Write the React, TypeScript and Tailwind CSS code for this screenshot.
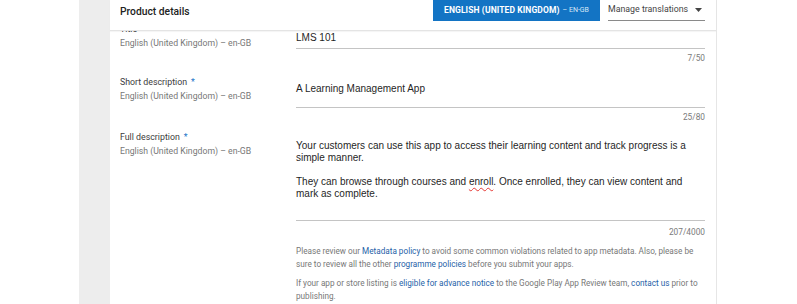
const labelFont = { fontFamily: "Roboto, 'Liberation Sans', sans-serif" };

function FieldLabel({ title, required = false }: { title: string; required?: boolean }) {
  return (
    <div className="w-[176px] shrink-0" style={labelFont}>
      <div className="text-[8.8px] leading-[12px] text-[#3c3c3c]">
        {title}
        {required && <span className="ml-[4px] text-[#1a73c8]">*</span>}
      </div>
      <div className="mt-[2px] text-[8.7px] leading-[12px] text-[#777]">English (United Kingdom) – en-GB</div>
    </div>
  );
}

function Counter({ value, className = "" }: { value: string; className?: string }) {
  return (
    <div className={`text-right text-[8.3px] leading-[10px] text-[#7a7a7a] ${className}`} style={labelFont}>
      {value}
    </div>
  );
}

export default function App() {
  return (
    <div className="flex w-[797px] h-[304px] overflow-hidden bg-white">
      <div className="w-[79px] shrink-0" />
      <div className="w-[31px] shrink-0 bg-[#ededed]" />

      <div className="w-[607px] shrink-0 flex flex-col border-r border-[#e6e6e6] bg-white">
        {/* sticky header */}
        <div className="relative z-10 h-[31px] shrink-0 flex items-start border-b border-[#e4e4e4] bg-white shadow-[0_1px_1px_rgba(0,0,0,0.04)]">
          <div className="pl-[10px] h-[24px] flex items-center text-[10.3px] font-medium text-[#222]" style={labelFont}>
            Product details
          </div>
          <div className="ml-auto flex items-start pr-[11px]">
            <div
              className="h-[21px] w-[167px] flex items-center justify-center bg-[#1374c4] text-white"
              style={labelFont}
            >
              <span className="text-[8.5px] font-bold tracking-[0.1px]">ENGLISH (UNITED KINGDOM)</span>
              <span className="ml-[3px] text-[7px] text-[#d7e8f7]">– EN-GB</span>
            </div>
            <div
              className="ml-[8px] h-[21px] w-[97px] flex items-center border-b border-[#8a8a8a] text-[8.8px] text-[#444]"
              style={labelFont}
            >
              <span>Manage translations</span>
              <svg className="ml-auto mr-[3px]" width="7" height="4" viewBox="0 0 7 4">
                <path d="M0 0h7L3.5 4z" fill="#444" />
              </svg>
            </div>
          </div>
        </div>

        {/* scrolled body */}
        <div className="flex-1 overflow-hidden">
          <div className="-mt-[8px] pl-[10px] pr-[11px]" style={{ fontFamily: "'Liberation Sans', Arial, sans-serif" }}>
            {/* Title */}
            <div className="flex">
              <FieldLabel title="Title" />
              <div className="flex-1">
                <div className="pt-[9px] pb-[4px] border-b border-[#c4c4c4] text-[10px] leading-[12px] text-[#1f1f1f]">
                  LMS 101
                </div>
                <Counter value="7/50" className="mt-[4px]" />
              </div>
            </div>

            {/* Short description */}
            <div className="flex mt-[13px]">
              <FieldLabel title="Short description" required />
              <div className="flex-1">
                <div className="pt-[7px] pb-[12px] border-b border-[#c4c4c4] text-[10px] leading-[12px] text-[#1f1f1f]">
                  A Learning Management App
                </div>
                <Counter value="25/80" className="mt-[4px]" />
              </div>
            </div>

            {/* Full description */}
            <div className="flex mt-[9px]">
              <FieldLabel title="Full description" required />
              <div className="flex-1">
                <div className="pt-[9px] pb-[20px] border-b border-[#c4c4c4] text-[10px] leading-[12px] text-[#1f1f1f]">
                  <p className="pr-[14px]">
                    Your customers can use this app to access their learning content and track progress is a simple
                    manner.
                  </p>
                  <p className="mt-[12px] pr-[14px]">
                    They can browse through courses and{" "}
                    <span className="underline decoration-wavy decoration-[#e53935] decoration-1 underline-offset-2">
                      enroll
                    </span>
                    . Once enrolled, they can view content and mark as complete.
                  </p>
                </div>
                <Counter value="207/4000" className="mt-[6px]" />

                <div className="mt-[8px] text-[8.2px] leading-[13px] text-[#777]" style={labelFont}>
                  <p>
                    Please review our <span className="text-[#1f5fa8]">Metadata policy</span> to avoid some common
                    violations related to app metadata. Also, please be sure to review all the other{" "}
                    <span className="text-[#1f5fa8]">programme policies</span> before you submit your apps.
                  </p>
                  <p className="mt-[6px]">
                    If your app or store listing is <span className="text-[#1f5fa8]">eligible for advance notice</span>{" "}
                    to the Google Play App Review team, <span className="text-[#1f5fa8]">contact us</span> prior to
                    publishing.
                  </p>
                </div>
              </div>
            </div>
          </div>
        </div>
      </div>

      <div className="flex-1 bg-white" />
    </div>
  );
}
